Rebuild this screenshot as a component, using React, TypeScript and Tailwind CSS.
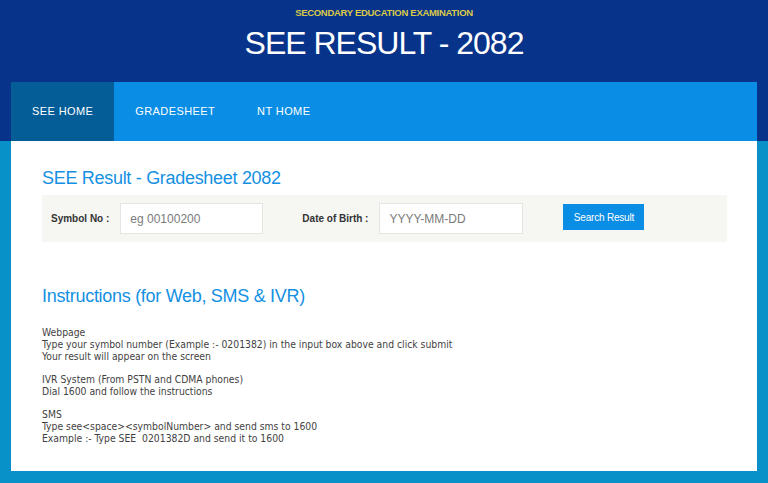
import React from 'react';

const navItems = ['SEE HOME', 'GRADESHEET', 'NT HOME'];

const instructions = [
  ['Webpage', 'Type your symbol number (Example :- 0201382) in the input box above and click submit', 'Your result will appear on the screen'],
  ['IVR System (From PSTN and CDMA phones)', 'Dial 1600 and follow the instructions'],
  ['SMS', 'Type see<space><symbolNumber> and send sms to 1600', 'Example :- Type SEE\u00a0 0201382D and send it to 1600'],
];

export default function App() {
  return (
    <div className="min-h-[483px] w-[768px] bg-[#0890c8] font-['Liberation_Sans',Arial,sans-serif]">
      {/* Header */}
      <div className="bg-[#07338b] px-[11px]">
        <div className="flex h-[82px] flex-col items-center">
          <p className="mt-[7px] text-[9.5px] font-bold leading-[12px] tracking-[-0.3px] text-[#d9c94a]">SECONDARY EDUCATION EXAMINATION</p>
          <h1 className="mt-[4px] text-[32px] leading-[40px] tracking-[-1px] text-white">SEE RESULT - 2082</h1>
        </div>
        <nav className="flex h-[59px] bg-[#0a8de4]">
          {navItems.map((item, i) => (
            <a
              key={item}
              className={`flex items-center px-[21px] text-[11px] tracking-[0.4px] text-white ${i === 0 ? 'bg-[#045d97]' : ''}`}
            >
              {item}
            </a>
          ))}
        </nav>
      </div>

      {/* Content */}
      <div className="mx-[11px] h-[330px] bg-white px-[31px] pt-[26px]">
        <h2 className="text-[18px] leading-[22px] tracking-[-0.3px] text-[#1490e3]">SEE Result - Gradesheet 2082</h2>

        <div className="mt-[6px] flex h-[47px] w-[685px] items-center bg-[#f6f6f3] pl-[9px]">
          <label className="text-[10px] font-bold text-[#333]">Symbol No :</label>
          <input
            className="ml-[11px] h-[31px] w-[143px] border border-[#e5e5e0] bg-white px-[9px] text-[12px] text-[#555] outline-none placeholder:text-[#7a7a7a]"
            placeholder="eg 00100200"
          />
          <label className="ml-[39px] text-[10px] font-bold text-[#333]">Date of Birth :</label>
          <input
            className="ml-[11px] h-[31px] w-[144px] border border-[#e5e5e0] bg-white px-[9px] text-[12px] text-[#555] outline-none placeholder:text-[#7a7a7a]"
            placeholder="YYYY-MM-DD"
          />
          <button className="ml-[40px] -mt-[3px] h-[26px] w-[81px] bg-[#0a8de4] text-[10px] tracking-[-0.2px] text-white">
            Search Result
          </button>
        </div>

        <h2 className="mt-[42px] text-[18px] leading-[24px] tracking-[-0.3px] text-[#1490e3]">Instructions (for Web, SMS &amp; IVR)</h2>

        <div className="mt-[18px] flex flex-col gap-[11px] font-['DejaVu_Sans_Condensed','Liberation_Sans',sans-serif] text-[10.3px] leading-[12px] text-[#3f3f3f]">
          {instructions.map((block, i) => (
            <div key={i}>
              {block.map((line) => (
                <p key={line}>{line}</p>
              ))}
            </div>
          ))}
        </div>
      </div>
    </div>
  );
}
